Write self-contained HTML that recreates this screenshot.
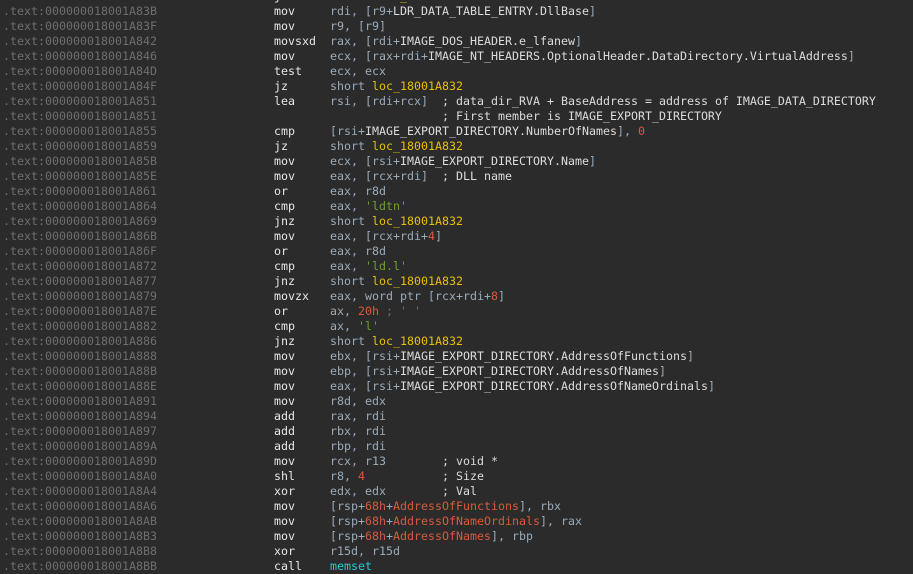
<!DOCTYPE html>
<html><head><meta charset="utf-8"><style>
body{margin:0;background:#2b2b2b;width:913px;height:574px;overflow:hidden;position:relative;font-family:"DejaVu Sans Mono","Liberation Mono",monospace;font-size:11.63px;}
.r{position:absolute;left:0;height:15px;line-height:15px;white-space:pre;width:913px}
.a{position:absolute;left:3px;color:#6e6e6e}
.m{position:absolute;left:274px;color:#e6e6e6}
.o{position:absolute;left:330px;color:#9aabba}
.w{color:#dcdcdc}.y{color:#e8c000}.n{color:#d85a3c}.g{color:#6fa12a}.c{color:#26c8d8}.d{color:#6a6a6a}
</style></head><body>
<div id="c"></div>
<script>
const L=[
["","j",'<span class="y">          _</span>'],
["A83B","mov",'rdi, [r9+<span class="w">LDR_DATA_TABLE_ENTRY.DllBase</span>]'],
["A83F","mov","r9, [r9]"],
["A842","movsxd",'rax, [rdi+<span class="w">IMAGE_DOS_HEADER.e_lfanew</span>]'],
["A846","mov",'ecx, [rax+rdi+<span class="w">IMAGE_NT_HEADERS.OptionalHeader.DataDirectory.VirtualAddress</span>]'],
["A84D","test","ecx, ecx"],
["A84F","jz",'short <span class="y">loc_18001A832</span>'],
["A851","lea",'rsi, [rdi+rcx]  <span class="w">; data_dir_RVA + BaseAddress = address of IMAGE_DATA_DIRECTORY</span>'],
["A851","",'<span class="w">                ; First member is IMAGE_EXPORT_DIRECTORY</span>'],
["A855","cmp",'[rsi+<span class="w">IMAGE_EXPORT_DIRECTORY.NumberOfNames</span>], <span class="n">0</span>'],
["A859","jz",'short <span class="y">loc_18001A832</span>'],
["A85B","mov",'ecx, [rsi+<span class="w">IMAGE_EXPORT_DIRECTORY.Name</span>]'],
["A85E","mov",'eax, [rcx+rdi]  <span class="w">; DLL name</span>'],
["A861","or","eax, r8d"],
["A864","cmp",'eax, <span class="g">\'ldtn\'</span>'],
["A869","jnz",'short <span class="y">loc_18001A832</span>'],
["A86B","mov",'eax, [rcx+rdi+<span class="n">4</span>]'],
["A86F","or","eax, r8d"],
["A872","cmp",'eax, <span class="g">\'ld.l\'</span>'],
["A877","jnz",'short <span class="y">loc_18001A832</span>'],
["A879","movzx",'eax, word ptr [rcx+rdi+<span class="n">8</span>]'],
["A87E","or",'ax, <span class="n">20h</span> <span class="d">; \' \'</span>'],
["A882","cmp",'ax, <span class="g">\'l\'</span>'],
["A886","jnz",'short <span class="y">loc_18001A832</span>'],
["A888","mov",'ebx, [rsi+<span class="w">IMAGE_EXPORT_DIRECTORY.AddressOfFunctions</span>]'],
["A88B","mov",'ebp, [rsi+<span class="w">IMAGE_EXPORT_DIRECTORY.AddressOfNames</span>]'],
["A88E","mov",'eax, [rsi+<span class="w">IMAGE_EXPORT_DIRECTORY.AddressOfNameOrdinals</span>]'],
["A891","mov","r8d, edx"],
["A894","add","rax, rdi"],
["A897","add","rbx, rdi"],
["A89A","add","rbp, rdi"],
["A89D","mov",'rcx, r13        <span class="w">; void *</span>'],
["A8A0","shl",'r8, <span class="n">4</span>           <span class="w">; Size</span>'],
["A8A4","xor",'edx, edx        <span class="w">; Val</span>'],
["A8A6","mov",'[rsp+<span class="n">68h</span>+<span class="n">AddressOfFunctions</span>], rbx'],
["A8AB","mov",'[rsp+<span class="n">68h</span>+<span class="n">AddressOfNameOrdinals</span>], rax'],
["A8B3","mov",'[rsp+<span class="n">68h</span>+<span class="n">AddressOfNames</span>], rbp'],
["A8B8","xor","r15d, r15d"],
["A8BB","call",'<span class="c">memset</span>']
];
let h="";
L.forEach((l,i)=>{h+=`<div class="r" style="top:${-11+15*i}px">`+(l[0]?`<span class="a">.text:000000018001${l[0]}</span>`:"")+`<span class="m">${l[1]}</span><span class="o">${l[2]}</span></div>`;});
document.getElementById("c").innerHTML=h;
</script>
</body></html>
